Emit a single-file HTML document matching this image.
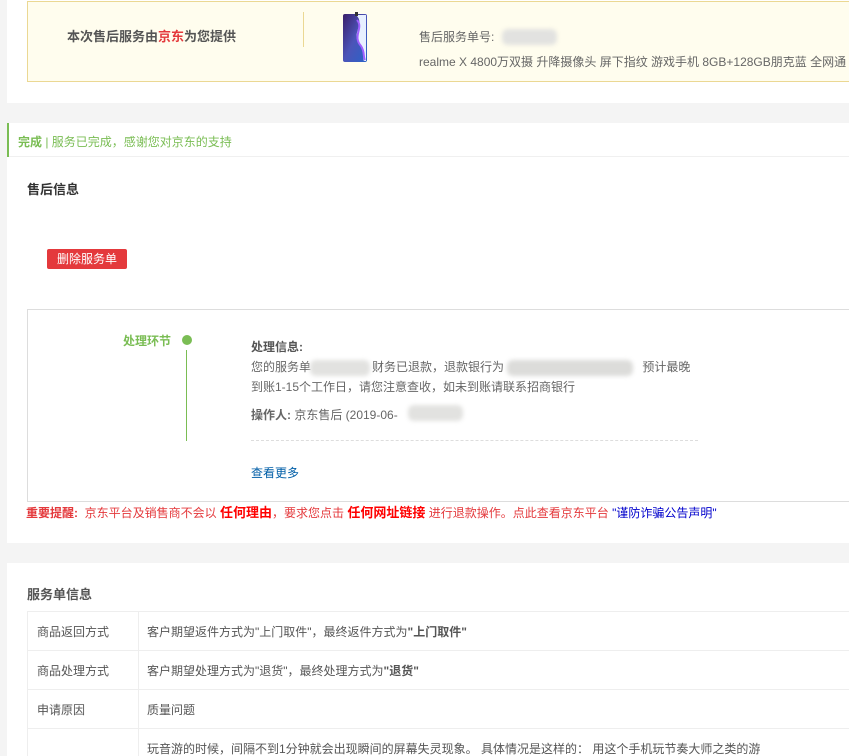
<!DOCTYPE html>
<html><head><meta charset="utf-8">
<style>
*{margin:0;padding:0;box-sizing:border-box}
html,body{width:849px;height:756px;overflow:hidden}
body{background:#f4f4f4;font-family:"Liberation Sans","Noto Sans CJK SC",sans-serif;font-size:12px;color:#666;position:relative}
.abs{position:absolute}
.blur{position:absolute;background:#e2e2e0;border-radius:6px;filter:blur(2px)}
</style></head><body>
<div class="abs" style="left:7px;top:0;width:842px;height:103px;background:#fff"></div>
<div class="abs" style="left:27px;top:1px;width:830px;height:81px;background:#fffdee;border:1px solid #ebd893"></div>
<div class="abs" style="left:67px;top:26px;font-size:13px;font-weight:bold;color:#555">本次售后服务由<span style="color:#e4393c">京东</span>为您提供</div>
<div class="abs" style="left:303px;top:12px;width:1px;height:35px;background:#ebd893"></div>
<svg class="abs" style="left:340px;top:12px" width="30" height="51" viewBox="0 0 30 51">
<defs><linearGradient id="g" x1="0" y1="0" x2="1" y2="1"><stop offset="0" stop-color="#3a1f6a"/><stop offset=".5" stop-color="#4c54b8"/><stop offset="1" stop-color="#2a63c8"/></linearGradient></defs>
<rect x="3" y="2" width="24" height="48" rx="2" fill="url(#g)"/>
<path d="M16 3 C26 12 10 22 20 32 C26 40 22 46 24 49 L26 49 L26 3Z" fill="#e8f0ff"/>
<path d="M17 8 C24 16 12 24 21 34 C25 40 23 45 25 48" stroke="#a060ff" stroke-width="2" fill="none"/>
<rect x="15" y="0" width="3" height="4" fill="#333"/>
</svg>
<div class="abs" style="left:419px;top:28px;color:#666">售后服务单号:</div>
<div class="blur" style="left:502px;top:29px;width:55px;height:16px"></div>
<div class="abs" style="left:419px;top:53px;color:#666;white-space:nowrap">realme X 4800万双摄 升降摄像头 屏下指纹 游戏手机 8GB+128GB朋克蓝 全网通</div>

<div class="abs" style="left:7px;top:123px;width:842px;height:420px;background:#fff"></div>
<div class="abs" style="left:7px;top:123px;width:2px;height:34px;background:#7abd54"></div>
<div class="abs" style="left:9px;top:156px;width:840px;height:1px;background:#f0f0f0"></div>
<div class="abs" style="left:18px;top:133px;color:#7abd54"><b>完成</b> | 服务已完成，感谢您对京东的支持</div>
<div class="abs" style="left:27px;top:179px;font-size:13px;font-weight:bold;color:#333">售后信息</div>
<div class="abs" style="left:47px;top:249px;width:80px;height:20px;background:#e4393c;color:#fff;text-align:center;line-height:20px;border-radius:2px">删除服务单</div>

<div class="abs" style="left:27px;top:309px;width:830px;height:193px;border:1px solid #ddd"></div>
<div class="abs" style="left:123px;top:332px;color:#7abd54;font-weight:bold">处理环节</div>
<div class="abs" style="left:182px;top:335px;width:10px;height:10px;border-radius:50%;background:#7abd54"></div>
<div class="abs" style="left:186px;top:350px;width:1px;height:91px;background:#7abd54"></div>
<div class="abs" style="left:251px;top:338px;color:#555;font-weight:bold">处理信息:</div>
<div class="abs" style="left:251px;top:357px;color:#666;line-height:20px;width:460px">您的服务单<span style="display:inline-block;width:61px"></span>财务已退款，退款银行为<span style="display:inline-block;width:135px"></span> 预计最晚<br>到账1-15个工作日，请您注意查收，如未到账请联系招商银行</div>
<div class="blur" style="left:310px;top:360px;width:60px;height:16px"></div>
<div class="blur" style="left:507px;top:360px;width:126px;height:16px;background:#dcdcda"></div>
<div class="abs" style="left:251px;top:406px;color:#666"><b>操作人:</b> 京东售后 (2019-06-</div>
<div class="blur" style="left:408px;top:405px;width:55px;height:16px"></div>
<div class="abs" style="left:251px;top:440px;width:447px;border-top:1px dashed #ddd"></div>
<div class="abs" style="left:251px;top:464px;color:#005ea7">查看更多</div>
<div class="abs" style="left:26px;top:502px;color:#e4393c;white-space:nowrap"><b>重要提醒:</b> &nbsp;京东平台及销售商不会以 <b style="color:#f00;font-size:13px">任何理由</b>，要求您点击 <b style="color:#f00;font-size:13px">任何网址链接</b> 进行退款操作。点此查看京东平台 <span style="color:#00c">"谨防诈骗公告声明"</span></div>

<div class="abs" style="left:7px;top:563px;width:842px;height:193px;background:#fff"></div>
<div class="abs" style="left:27px;top:584px;font-size:13px;font-weight:bold;color:#555">服务单信息</div>
<div class="abs" style="left:27px;top:611px;width:830px;height:150px;border-top:1px solid #eee;border-left:1px solid #eee"></div>
<div class="abs" style="left:138px;top:611px;width:1px;height:150px;background:#eee"></div>
<div class="abs" style="left:27px;top:650px;width:830px;height:1px;background:#eee"></div>
<div class="abs" style="left:27px;top:689px;width:830px;height:1px;background:#eee"></div>
<div class="abs" style="left:27px;top:728px;width:830px;height:1px;background:#eee"></div>
<div class="abs" style="left:37px;top:623px;color:#555">商品返回方式</div>
<div class="abs" style="left:147px;top:623px;color:#555">客户期望返件方式为"上门取件"，最终返件方式为<b>"上门取件"</b></div>
<div class="abs" style="left:37px;top:662px;color:#555">商品处理方式</div>
<div class="abs" style="left:147px;top:662px;color:#555">客户期望处理方式为"退货"，最终处理方式为<b>"退货"</b></div>
<div class="abs" style="left:37px;top:701px;color:#555">申请原因</div>
<div class="abs" style="left:147px;top:701px;color:#555">质量问题</div>
<div class="abs" style="left:147px;top:740px;color:#555;white-space:nowrap">玩音游的时候，间隔不到1分钟就会出现瞬间的屏幕失灵现象。 具体情况是这样的： 用这个手机玩节奏大师之类的游</div>
</body></html>
